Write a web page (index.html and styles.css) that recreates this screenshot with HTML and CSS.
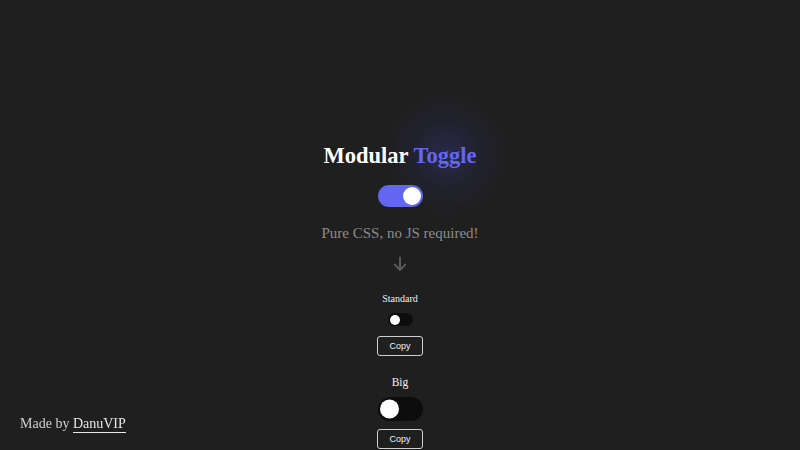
FILE: index.html
```html
<!DOCTYPE html>
<html lang="en">
<head>
<meta charset="utf-8">
<title>Modular Toggle</title>
<link rel="stylesheet" href="styles.css">
</head>
<body>
  <main class="page">
    <header class="hero">
      <span class="glow"></span>
      <h1 class="title">Modular <span class="accent">Toggle</span></h1>
      <label class="toggle toggle--hero">
        <input type="checkbox" checked>
        <span class="track"></span>
      </label>
      <p class="tagline">Pure CSS, no JS required!</p>
      <svg class="arrow" width="14" height="16" viewBox="0 0 14 16" aria-hidden="true">
        <path d="M7 1.5V14M1.8 8.8L7 14l5.2-5.2" fill="none" stroke="currentColor" stroke-width="2" stroke-linecap="round" stroke-linejoin="round"/>
      </svg>
    </header>

    <section class="demo">
      <h2 class="demo-label">Standard</h2>
      <label class="toggle toggle--standard">
        <input type="checkbox">
        <span class="track"></span>
      </label>
      <button class="copy">Copy</button>
    </section>

    <section class="demo">
      <h2 class="demo-label demo-label--big">Big</h2>
      <label class="toggle toggle--big">
        <input type="checkbox">
        <span class="track"></span>
      </label>
      <button class="copy">Copy</button>
    </section>
  </main>

  <footer class="credit">Made by <a href="#">DanuVIP</a></footer>
</body>
</html>
```

FILE: styles.css
```css
* { box-sizing: border-box; }

html, body {
  margin: 0;
  height: 100%;
  overflow: hidden;
}

body {
  background: #1f1f1f;
  color: #f2f2f2;
  font-family: "Liberation Serif", "Times New Roman", serif;
}

.page {
  display: flex;
  flex-direction: column;
  align-items: center;
  padding-top: 142px;
}

.hero {
  position: relative;
  display: flex;
  flex-direction: column;
  align-items: center;
}

.glow {
  position: absolute;
  left: 60px;
  top: -50px;
  width: 130px;
  height: 125px;
  border-radius: 50%;
  background: radial-gradient(circle, rgba(55, 55, 140, 0.42) 0%, rgba(42, 42, 100, 0.2) 38%, rgba(31, 31, 31, 0) 70%);
  pointer-events: none;
}

.title {
  position: relative;
  margin: 0;
  font-size: 22.5px;
  line-height: 28px;
  font-weight: 700;
  color: #ffffff;
}

.accent { color: #6366f1; }

.tagline {
  margin: 16px 0 0;
  font-size: 15px;
  line-height: 20px;
  color: #8c8c8c;
}

.arrow {
  display: block;
  margin-top: 13px;
  color: #595959;
}

/* toggle switch */
.toggle {
  position: relative;
  display: inline-block;
  cursor: pointer;
}

.toggle input {
  position: absolute;
  opacity: 0;
  width: 0;
  height: 0;
}

.track {
  display: block;
  width: 100%;
  height: 100%;
  border-radius: 999px;
  background: #0d0d0d;
  transition: background 0.2s;
}

.track::after {
  content: "";
  position: absolute;
  top: 50%;
  left: 2px;
  border-radius: 50%;
  background: #ffffff;
  transform: translateY(-50%);
  transition: left 0.2s;
}

.toggle input:checked + .track { background: #6366f1; }

.toggle--hero {
  width: 45px;
  height: 22px;
  margin-top: 15px;
}
.toggle--hero .track::after { width: 18px; height: 18px; }
.toggle--hero input:checked + .track::after { left: 25px; }

.toggle--standard {
  width: 25px;
  height: 13px;
}
.toggle--standard .track::after { width: 10px; height: 10px; left: 2px; }

.toggle--big {
  width: 45px;
  height: 24px;
}
.toggle--big .track::after { width: 19px; height: 19px; left: 2px; }

.demo {
  display: flex;
  flex-direction: column;
  align-items: center;
}

.demo:first-of-type { margin-top: 20px; }

.demo + .demo { margin-top: 19px; }

.demo-label {
  margin: 0 0 7px;
  font-size: 10px;
  line-height: 14px;
  font-weight: 400;
  color: #f2f2f2;
}

.demo-label--big {
  font-size: 11.5px;
  margin-bottom: 8px;
}

.copy {
  margin-top: 10px;
  width: 46px;
  height: 20px;
  padding: 0;
  border: 1px solid #cfcfcf;
  border-radius: 3px;
  background: transparent;
  color: #f2f2f2;
  font-family: "Liberation Sans", Arial, sans-serif;
  font-size: 9px;
  cursor: pointer;
}

.toggle--big + .copy { margin-top: 8px; }

.credit {
  position: fixed;
  left: 20px;
  bottom: 17px;
  font-size: 14px;
  line-height: 18px;
  letter-spacing: 0;
  color: #cfcfcf;
}

.credit a {
  color: #e6e6e6;
  text-decoration: none;
  border-bottom: 1.5px solid #e6e6e6;
  padding-bottom: 1px;
}
```
